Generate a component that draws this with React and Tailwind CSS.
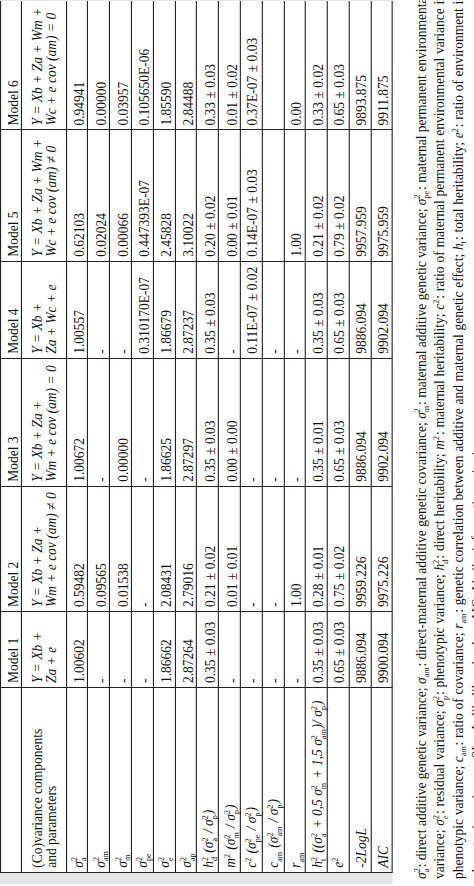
import React from 'react';

// scripts stacked after a symbol: superscript over subscript
const Sc = ({ sup, sub }) => (
    <span className="inline-flex flex-col align-[5px] text-[8px] leading-[8px] not-italic mr-[1px]">
        <span>{sup || '\u00a0'}</span>
        <span>{sub || '\u00a0'}</span>
    </span>
);

const Sig = ({ sup = '2', sub }) => (
    <span><i>σ</i><Sc sup={sup} sub={sub} /></span>
);

const labels = [
    <span><Sig sub="a" /></span>,
    <span><Sig sub="am" /></span>,
    <span><Sig sub="m" /></span>,
    <span><Sig sub="pe" /></span>,
    <span><Sig sub="e" /></span>,
    <span><Sig sub="ap" /></span>,
    <span className="italic">h<Sc sup="2" sub="d" /> (<Sig sub="a" /> / <Sig sub="p" />)</span>,
    <span className="italic">m<Sc sup="2" /> (<Sig sub="m" /> / <Sig sub="p" />)</span>,
    <span className="italic">c<Sc sup="2" /> (<Sig sub="pe" /> / <Sig sub="p" />)</span>,
    <span className="italic">c<Sc sub="am" /> (<Sig sub="am" /> / <Sig sub="p" />)</span>,
    <span className="italic">r<Sc sub="am" /></span>,
    <span className="italic whitespace-nowrap">h<Sc sup="2" sub="t" /> ((<Sig sub="a" /> + 0,5 <Sig sub="m" /> + 1,5 <Sig sub="am" />)/ <Sig sub="p" />)</span>,
    <span className="italic">e<Sc sup="2" /></span>,
    <span className="italic">-2LogL</span>,
    <span className="italic">AIC</span>,
];

const models = [
    { name: 'Model 1', f: ['Y = Xb +', 'Za + e'], v: ['1.00602', '-', '-', '-', '1.86662', '2.87264', '0.35 ± 0.03', '-', '-', '-', '-', '0.35 ± 0.03', '0.65 ± 0.03', '9886.094', '9900.094'] },
    { name: 'Model 2', f: ['Y = Xb + Za +', 'Wm + e cov (am) ≠ 0'], v: ['0.59482', '0.09565', '0.01538', '-', '2.08431', '2.79016', '0.21 ± 0.02', '0.01 ± 0.01', '-', '-', '1.00', '0.28 ± 0.01', '0.75 ± 0.02', '9959.226', '9975.226'] },
    { name: 'Model 3', f: ['Y = Xb + Za +', 'Wm + e cov (am) = 0'], v: ['1.00672', '-', '0.00000', '-', '1.86625', '2.87297', '0.35 ± 0.03', '0.00 ± 0.00', '-', '-', '-', '0.35 ± 0.01', '0.65 ± 0.03', '9886.094', '9902.094'] },
    { name: 'Model 4', f: ['Y = Xb +', 'Za + Wc + e'], v: ['1.00557', '-', '-', '0.310170E-07', '1.86679', '2.87237', '0.35 ± 0.03', '-', '0.11E-07 ± 0.02', '-', '-', '0.35 ± 0.03', '0.65 ± 0.03', '9886.094', '9902.094'] },
    { name: 'Model 5', f: ['Y = Xb + Za + Wm +', 'Wc + e cov (am) ≠ 0'], v: ['0.62103', '0.02024', '0.00066', '0.447393E-07', '2.45828', '3.10022', '0.20 ± 0.02', '0.00 ± 0.01', '0.14E-07 ± 0.03', '', '1.00', '0.21 ± 0.02', '0.79 ± 0.02', '9957.959', '9975.959'] },
    { name: 'Model 6', f: ['Y = Xb + Za + Wm +', 'Wc + e cov (am) = 0'], v: ['0.94941', '0.00000', '0.03957', '0.105650E-06', '1.85590', '2.84488', '0.33 ± 0.03', '0.01 ± 0.02', '0.37E-07 ± 0.03', '', '0.00', '0.33 ± 0.02', '0.65 ± 0.03', '9893.875', '9911.875'] },
];

const Cell = ({ last, className = '', children }) => (
    <div className={`${last ? 'border-b' : 'border-r border-b'} border-[#222] px-[4px] flex ${className}`}>
        {children}
    </div>
);

export default function App() {
    return (
        <div className="w-[474px] h-[886px] overflow-hidden bg-white">
            {/* the page is printed sideways: lay it out landscape, then turn it */}
            <div className="w-[886px] h-[431px] origin-top-left [transform:translateY(886px)_rotate(-90deg)_scaleY(1.1)] font-['Liberation_Serif','Times_New_Roman',serif] text-[13.5px] text-[#111]">
                <div className="flex -mt-[2.5px]">
                    <div className="w-[12px] bg-[#e6e6e6]" />
                    <div className="grid grid-cols-[184.7px_76px_125.3px_128px_97px_131.3px_128.7px] grid-rows-[19.2px_40.5px_repeat(15,19.79px)] border-l border-t border-[#222]">
                        {/* header row */}
                        <Cell />
                        {models.map((m, i) => (
                            <Cell key={m.name} last={i === 5} className="items-end leading-[15px]">{m.name}</Cell>
                        ))}
                        {/* model formulas */}
                        <Cell className="flex-col justify-center leading-[13.6px] pt-[1px]">
                            <span>(Co)variance components</span>
                            <span>and parameters</span>
                        </Cell>
                        {models.map((m, i) => (
                            <Cell key={m.name + 'f'} last={i === 5} className="flex-col justify-center leading-[13.6px] italic whitespace-nowrap pt-[1px]">
                                <span>{m.f[0]}</span>
                                <span>{m.f[1]}</span>
                            </Cell>
                        ))}
                        {labels.map((lab, r) => (
                            <React.Fragment key={r}>
                                <Cell className="items-center pt-[3px] leading-[15px] whitespace-nowrap">{lab}</Cell>
                                {models.map((m, i) => (
                                    <Cell key={m.name + r} last={i === 5} className="items-center pt-[3px] leading-[15px] whitespace-nowrap">{m.v[r]}</Cell>
                                ))}
                            </React.Fragment>
                        ))}
                    </div>
                    <div className="w-[3px] bg-[#e6e6e6]" />
                </div>

                <div className="mt-[17.2px] pl-[5px] leading-[15.45px]">
                    <div className="w-[885px] whitespace-nowrap [text-align-last:justify]">
                        <Sig sub="a" />: direct additive genetic variance; <i>σ</i><Sc sub="am" />: direct-maternal additive genetic covariance; <Sig sub="m" />: maternal additive genetic variance; <Sig sub="pe" />: maternal permanent environmental
                    </div>
                    <div className="w-[885px] whitespace-nowrap [text-align-last:justify]">
                        variance; <Sig sub="e" />: residual variance; <Sig sub="p" />: phenotypic variance; <i>h</i><Sc sup="2" sub="d" />: direct heritability; <i>m</i><Sc sup="2" />: maternal heritability; <i>c</i><Sc sup="2" />: ratio of maternal permanent environmental variance in
                    </div>
                    <div className="w-[885px] whitespace-nowrap [text-align-last:justify]">
                        phenotypic variance; <i>c</i><Sc sub="am" />: ratio of covariance; <i>r</i><Sc sub="am" />: genetic correlation between additive and maternal genetic effect; <i>h</i><Sc sub="t" />: total heritability; <i>e</i><Sc sup="2" />: ratio of environment in
                    </div>
                    <div className="whitespace-nowrap">
                        phenotypic variance; <i>-2LogL</i>: likelihood value; <i>AIC</i>: Akaike information criterion.
                    </div>
                </div>
            </div>
        </div>
    );
}
